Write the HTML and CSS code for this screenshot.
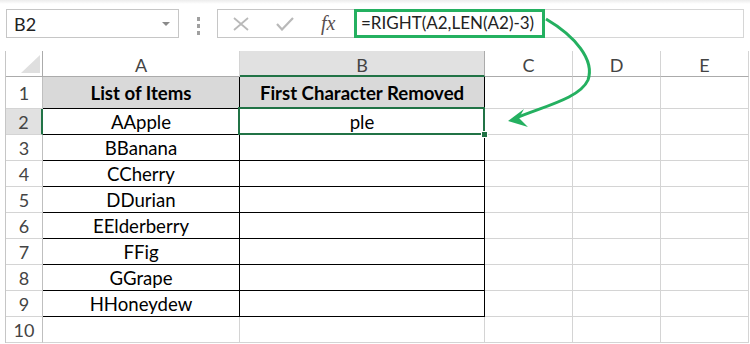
FILE: index.html
```html
<!DOCTYPE html>
<html lang="en">

<head>
    <meta charset="UTF-8">
    <title>RIGHT formula</title>
    <link rel="stylesheet" href="styles.css">
</head>

<body>
    <div class="app">
        <div class="toolbar">
            <div class="namebox">
                <span>B2</span>
                <span class="caret"></span>
            </div>
            <div class="grip"><i></i><i></i><i></i></div>
            <div class="fbtns">
                <svg width="16" height="14" viewBox="0 0 16 14">
                    <path d="M1 1 L15 13 M15 1 L1 13" stroke="#b9b9b9" stroke-width="1.8" fill="none"/>
                </svg>
                <svg width="18" height="14" viewBox="0 0 18 14">
                    <path d="M1 7 L6 12.5 L17 1" stroke="#b9b9b9" stroke-width="2.2" fill="none"/>
                </svg>
                <span class="fx">fx</span>
            </div>
            <div class="fbar">
                <span class="formula">=RIGHT(A2,LEN(A2)-3)</span>
            </div>
        </div>

        <div class="sheet">
            <!-- column headers -->
            <div class="h corner"></div>
            <div class="h">A</div>
            <div class="h selcol">B</div>
            <div class="h">C</div>
            <div class="h">D</div>
            <div class="h">E</div>

            <div class="rh">1</div>
            <div class="c t head">List of Items</div>
            <div class="c t head">First Character Removed</div>
            <div class="c"></div><div class="c"></div><div class="c"></div>

            <div class="rh selrow">2</div>
            <div class="c t">AApple</div>
            <div class="c t active">ple</div>
            <div class="c"></div><div class="c"></div><div class="c"></div>

            <div class="rh">3</div>
            <div class="c t">BBanana</div>
            <div class="c t"></div>
            <div class="c"></div><div class="c"></div><div class="c"></div>

            <div class="rh">4</div>
            <div class="c t">CCherry</div>
            <div class="c t"></div>
            <div class="c"></div><div class="c"></div><div class="c"></div>

            <div class="rh">5</div>
            <div class="c t">DDurian</div>
            <div class="c t"></div>
            <div class="c"></div><div class="c"></div><div class="c"></div>

            <div class="rh">6</div>
            <div class="c t">EElderberry</div>
            <div class="c t"></div>
            <div class="c"></div><div class="c"></div><div class="c"></div>

            <div class="rh">7</div>
            <div class="c t">FFig</div>
            <div class="c t"></div>
            <div class="c"></div><div class="c"></div><div class="c"></div>

            <div class="rh">8</div>
            <div class="c t">GGrape</div>
            <div class="c t"></div>
            <div class="c"></div><div class="c"></div><div class="c"></div>

            <div class="rh">9</div>
            <div class="c t">HHoneydew</div>
            <div class="c t"></div>
            <div class="c"></div><div class="c"></div><div class="c"></div>

            <div class="rh">10</div>
            <div class="c"></div><div class="c"></div>
            <div class="c"></div><div class="c"></div><div class="c"></div>
        </div>

        <!-- callout arrow from formula to cell -->
        <svg class="arrow" width="750" height="344" viewBox="0 0 750 344">
            <path d="M546 19 C575 36 595 60 588 80 C580 98 545 106 516 118" stroke="#24b060" stroke-width="3" fill="none"/>
            <polygon points="508,121 524,109 519,118 528,127" fill="#24b060"/>
        </svg>
    </div>
</body>

</html>
```

FILE: styles.css
```css
body {
    margin: 0;
    background: #fff;
    font-family: Lato, "Open Sans", sans-serif;
    color: #000;
}

.app {
    position: relative;
    width: 750px;
    height: 344px;
    overflow: hidden;
}

/* formula bar */
.toolbar {
    display: flex;
    align-items: flex-start;
    height: 51px;
    padding-top: 9px;
    box-sizing: border-box;
    background: linear-gradient(#ececec, #fff 4px);
}

.namebox {
    display: flex;
    align-items: center;
    justify-content: space-between;
    width: 173px;
    height: 29px;
    margin-left: 6px;
    padding: 0 8px 0 7px;
    box-sizing: border-box;
    border: 1px solid #c6c6c6;
    background: #fff;
    font-size: 18px;
    color: #222;
}

.caret {
    width: 0;
    height: 0;
    border-left: 4px solid transparent;
    border-right: 4px solid transparent;
    border-top: 4px solid #8a8a8a;
}

.grip {
    display: flex;
    flex-direction: column;
    align-items: center;
    gap: 3px;
    width: 38px;
    padding-top: 8px;
}

.grip i {
    display: block;
    width: 3px;
    height: 4px;
    background: #a0a0a0;
}

.fbtns {
    display: flex;
    align-items: center;
    width: 137px;
    height: 29px;
    box-sizing: border-box;
    border: 1px solid #c6c6c6;
    border-right: none;
    padding-left: 15px;
    gap: 27px;
    background: #fff;
}

.fx {
    font-family: "Liberation Serif", serif;
    font-style: italic;
    font-size: 20px;
    color: #5a5050;
}

.fbar {
    flex: 1;
    height: 29px;
    margin-right: 6px;
    box-sizing: border-box;
    border-top: 1px solid #d6d6d6;
    border-bottom: 1px solid #d6d6d6;
    border-right: 1px solid #d6d6d6;
}

.formula {
    display: block;
    width: 191px;
    height: 29px;
    margin-top: -1px;
    box-sizing: border-box;
    border: 3px solid #24b060;
    padding-left: 4px;
    font-size: 17px;
    line-height: 22px;
    color: #222;
}

/* sheet grid */
.sheet {
    display: grid;
    grid-template-columns: 37px 197px 245px 88px 88px 88px;
    grid-template-rows: 26px 32px repeat(9, 26px);
    margin-left: 5px;
    border-left: 1px solid #c6c6c6;
    width: 743px;
}

.sheet > div {
    box-sizing: border-box;
    display: flex;
    align-items: center;
    justify-content: center;
}

.h {
    font-size: 18px;
    color: #444;
    padding-top: 3px;
    border-right: 1px solid #d4d4d4;
    border-bottom: 1px solid #ababab;
}

.corner {
    position: relative;
    border-right-color: #ababab;
}

.corner::after {
    content: "";
    position: absolute;
    right: 2px;
    bottom: 3px;
    width: 0;
    height: 0;
    border-left: 19px solid transparent;
    border-bottom: 18px solid #dfdfdf;
}

.selcol {
    background: #e1e1e1;
    border-bottom: 2px solid #217346;
    border-right-color: #ababab;
}

.rh {
    font-size: 18px;
    color: #444;
    padding-top: 1px;
    border-right: 1px solid #bfbfbf;
    border-bottom: 1px solid #d4d4d4;
}

.selrow {
    background: #e1e1e1;
    border-right: 2px solid #217346;
}

.c {
    font-size: 18.6px;
    padding-top: 1px;
    border-right: 1px solid #d4d4d4;
    border-bottom: 1px solid #d4d4d4;
}

.t {
    border-right-color: #000;
    border-bottom-color: #000;
}

.head {
    background: #d9d9d9;
    font-weight: bold;
}

.active {
    position: relative;
}

.active::after {
    content: "";
    position: absolute;
    left: -2px;
    top: -2px;
    right: -1px;
    bottom: -1px;
    border: 2px solid #217346;
}

.active::before {
    content: "";
    position: absolute;
    right: -4px;
    bottom: -4px;
    width: 5px;
    height: 5px;
    background: #217346;
    border: 1px solid #fff;
    z-index: 1;
}

.arrow {
    position: absolute;
    left: 0;
    top: 0;
    pointer-events: none;
}
```
